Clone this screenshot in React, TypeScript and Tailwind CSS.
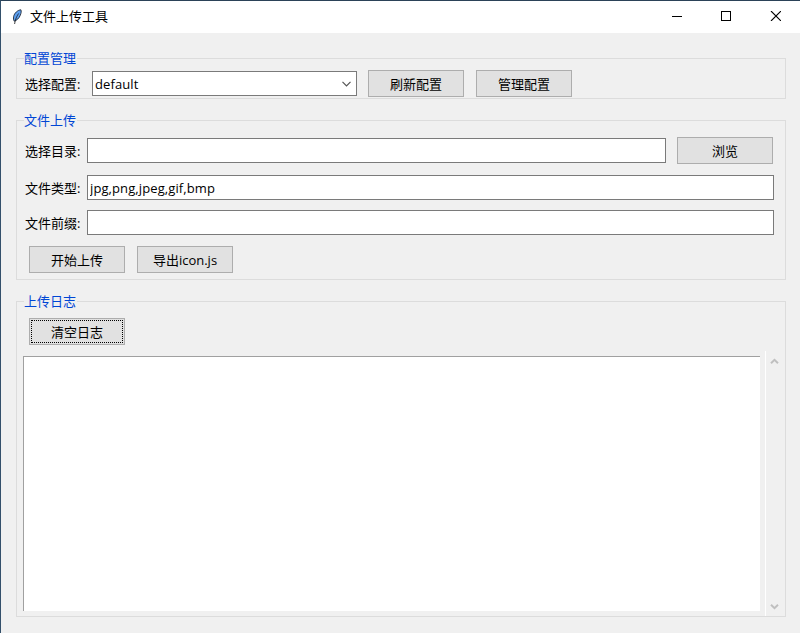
import type { ReactNode } from 'react';

function Group({ title, className, children }: { title: string; className?: string; children: ReactNode }) {
  return (
    <fieldset className={`min-w-0 border border-[#dcdcdc] ${className ?? ''}`}>
      <legend className="ml-[7px] h-[17px] w-[53px] whitespace-nowrap leading-[16px] text-[#0046d5]">{title}</legend>
      {children}
    </fieldset>
  );
}

function Button({ children, focused }: { children: ReactNode; focused?: boolean }) {
  return (
    <button className="h-[27px] w-24 shrink-0 border border-[#adadad] bg-[#e1e1e1] p-px text-black">
      <span
        className={`flex h-full items-center justify-center border border-dotted pt-px leading-none ${
          focused ? 'border-black' : 'border-transparent'
        }`}
      >
        {children}
      </span>
    </button>
  );
}

function Label({ children }: { children: ReactNode }) {
  return <label className="ml-2 w-[62px] shrink-0 whitespace-nowrap pt-0.5">{children}</label>;
}

function Entry({ value }: { value?: string }) {
  return (
    <input
      className="h-[25px] min-w-0 flex-1 border border-[#7a7a7a] bg-white px-[2px] tracking-[0.1px] text-black outline-none"
      defaultValue={value}
    />
  );
}

function ScrollArrow({ down }: { down?: boolean }) {
  return (
    <svg width="9" height="7" viewBox="0 0 9 7" className={down ? 'rotate-180' : ''}>
      <path d="M1 5.2 4.5 1.8 8 5.2" fill="none" stroke="#bfbfbf" strokeWidth="2" />
    </svg>
  );
}

function TitleBar() {
  return (
    <header className="flex h-8 shrink-0 items-center bg-white text-black">
      <svg width="10" height="16" viewBox="0 0 10 16" className="ml-[11px]">
        <path d="M8.9.8C6 .9 2.2 4 1.6 7.8c-.3 1.6-.1 3 .6 4.4 2.4-.8 4.9-2.8 6.1-6C9.2 4 9.5 2.2 8.9.8Z" fill="#5c9ff0" stroke="#222a36" strokeWidth=".9" />
        <path d="M6.6 4.5C5 7 3.5 9.5 2.6 15" fill="none" stroke="#111" strokeWidth=".8" />
      </svg>
      <h1 className="ml-2 flex-1">文件上传工具</h1>
      <svg width="109" height="10" viewBox="0 0 109 10" className="mb-0.5 mr-[19px]" fill="none" stroke="#000">
        <path d="M0 5.5H10" shapeRendering="crispEdges" />
        <path d="M49.5.5H58.5V9.5H49.5Z" shapeRendering="crispEdges" />
        <path d="M99 0 109 10M109 0 99 10" strokeWidth="1.1" />
      </svg>
    </header>
  );
}

export default function App() {
  return (
    <div className="flex h-[633px] w-[800px] flex-col overflow-hidden border-l border-t border-l-[#33506b] border-t-[#2b4258] bg-[#f0f0f0] font-['Open_Sans','Noto_Sans_CJK_SC',sans-serif] text-[13px] text-black">
      <TitleBar />
      <main className="flex flex-1 flex-col pb-4 pl-[15px] pr-[14px] pt-[17px]">
        <Group title="配置管理" className="h-[49px]">
          <div className="mt-[3px] flex items-center">
            <label className="ml-2 w-[67px] shrink-0 pt-0.5">选择配置:</label>
            <div className="flex h-[25px] w-[265px] items-center justify-between border border-[#7a7a7a] bg-white pl-[2px] pr-[5px]">
              <span className="pt-0.5 tracking-[0.1px]">default</span>
              <svg width="9" height="6" viewBox="0 0 9 6" fill="none" stroke="#555" strokeWidth="1.2">
                <path d="M.5.8 4.5 4.8 8.5.8" />
              </svg>
            </div>
            <div className="ml-[11px] flex gap-3">
              <Button>刷新配置</Button>
              <Button>管理配置</Button>
            </div>
          </div>
        </Group>

        <Group title="文件上传" className="mt-[13px] h-[168px]">
          <div className="mt-2 flex items-center pr-3">
            <Label>选择目录:</Label>
            <Entry />
            <div className="ml-[11px] flex">
              <Button>浏览</Button>
            </div>
          </div>
          <div className="mt-[11px] flex items-center pr-[11px]">
            <Label>文件类型:</Label>
            <Entry value="jpg,png,jpeg,gif,bmp" />
          </div>
          <div className="mt-[10px] flex items-center pr-[11px]">
            <Label>文件前缀:</Label>
            <Entry />
          </div>
          <div className="ml-3 mt-[11px] flex gap-3">
            <Button>开始上传</Button>
            <Button>导出icon.js</Button>
          </div>
        </Group>

        <Group title="上传日志" className="mt-[13px] h-[324px]">
          <div className="ml-3 mt-2 flex">
            <Button focused>清空日志</Button>
          </div>
          <div className="mt-[6px] flex h-[265px]">
            <textarea className="ml-[6px] mt-[5px] h-[255px] w-[737px] resize-none border-l border-t border-[#a0a0a0] bg-white outline-none" />
            <div className="ml-[5px] flex w-[18px] flex-col items-center justify-between border-l border-white pb-[6px] pt-[7px]">
              <ScrollArrow />
              <ScrollArrow down />
            </div>
          </div>
        </Group>
      </main>
    </div>
  );
}
